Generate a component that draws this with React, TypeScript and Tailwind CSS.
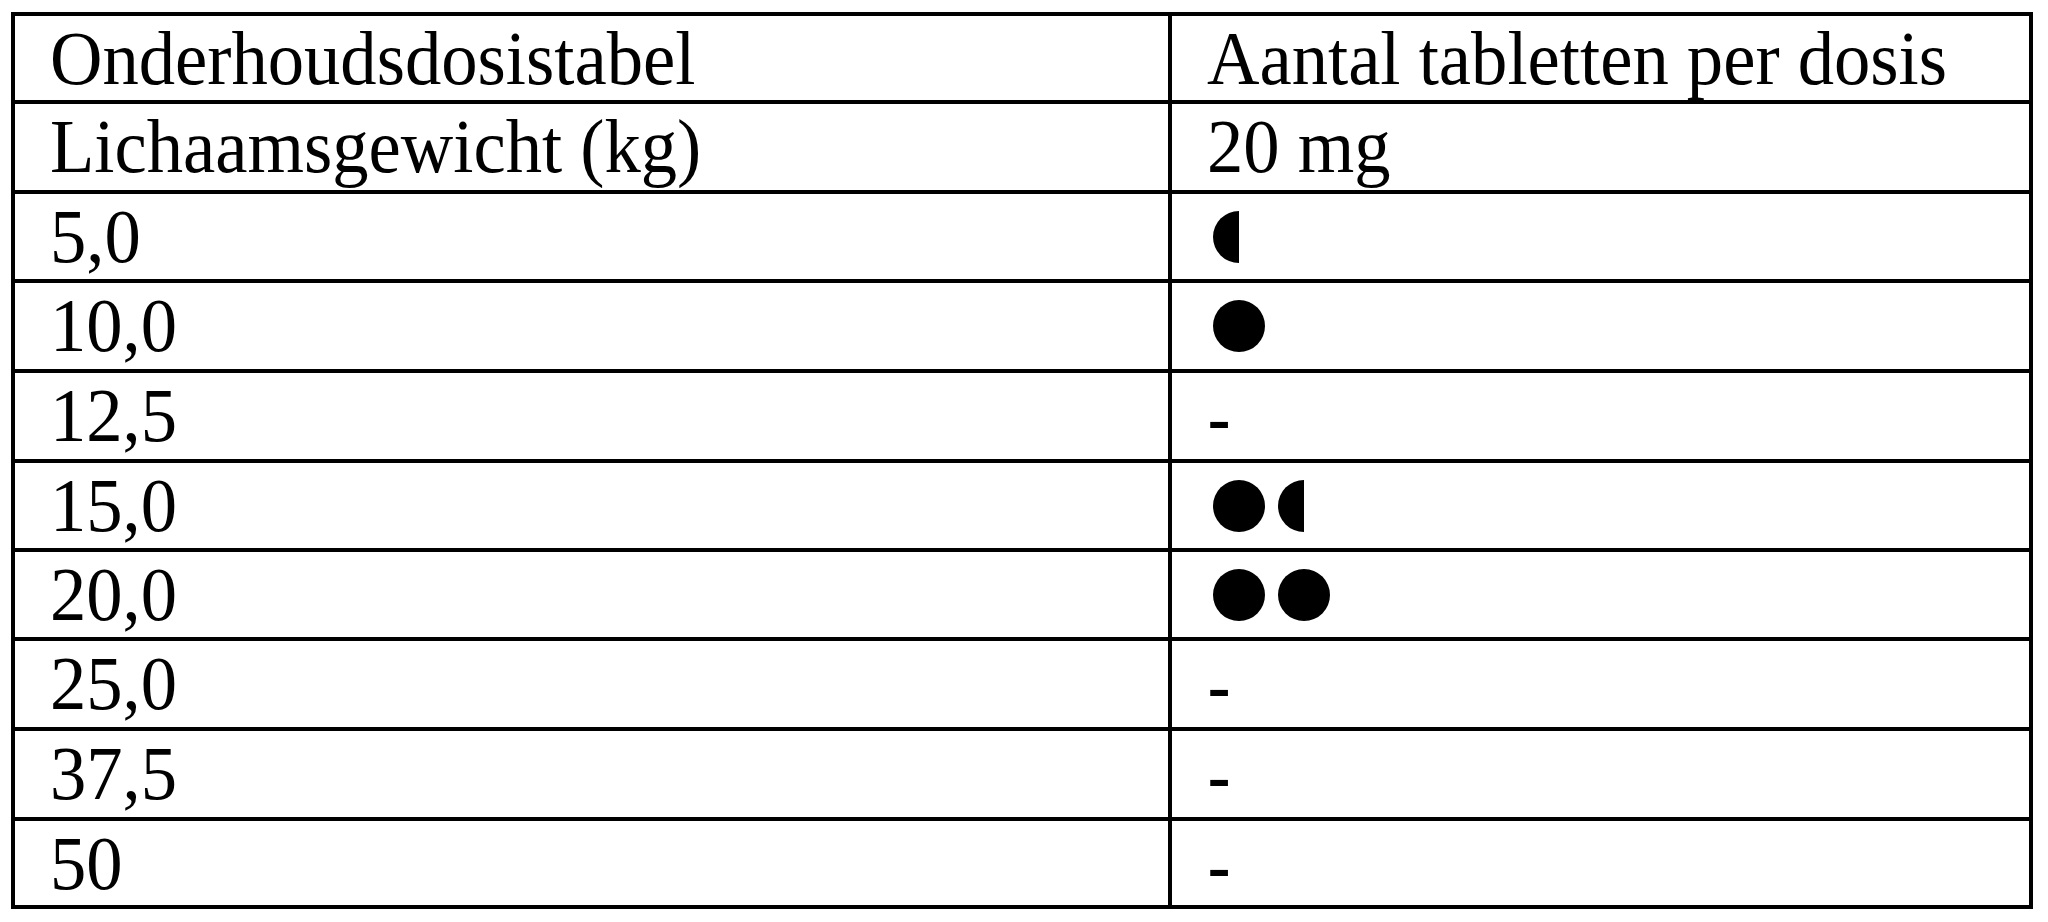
const rows: { weight: string; dose: ("full" | "half")[]; h: string }[] = [
  { weight: "5,0", dose: ["half"], h: "h-[89px]" },
  { weight: "10,0", dose: ["full"], h: "h-[90px]" },
  { weight: "12,5", dose: [], h: "h-[90px]" },
  { weight: "15,0", dose: ["full", "half"], h: "h-[89px]" },
  { weight: "20,0", dose: ["full", "full"], h: "h-[89px]" },
  { weight: "25,0", dose: [], h: "h-[90px]" },
  { weight: "37,5", dose: [], h: "h-[90px]" },
  { weight: "50", dose: [], h: "h-[88px]" },
];

const Txt = ({ children }: { children: React.ReactNode }) => (
  <span className="inline-block origin-left scale-x-[0.943] whitespace-nowrap">{children}</span>
);

// the "-" in the dose column is a heavier dash than the serif hyphen
const Dash = () => (
  <span className="inline-block origin-left translate-y-[4px] scale-x-[0.943] font-['Liberation_Sans',Arial,sans-serif]">
    -
  </span>
);

const Tablet = ({ kind }: { kind: "full" | "half" }) =>
  kind === "full" ? (
    <div className="h-[52px] w-[52px] rounded-full bg-black" />
  ) : (
    <div className="h-[52px] w-[26px] rounded-l-full bg-black" />
  );

const Row = ({
  left,
  right,
  h,
  first,
}: {
  left: React.ReactNode;
  right: React.ReactNode;
  h: string;
  first?: boolean;
}) => (
  <div className={first ? `flex ${h}` : `flex border-t-4 border-black ${h}`}>
    <div className="flex w-[1153px] items-start pl-[35px] leading-[85px]">{left}</div>
    <div className="flex flex-1 items-start border-l-4 border-black pl-[35px] leading-[85px]">{right}</div>
  </div>
);

export default function App() {
  return (
    <div className="min-h-screen w-full bg-white pt-[12px] pl-[11px] text-black">
      <div
        className="w-[2022px] border-4 border-black text-[77px]"
        style={{ fontFamily: '"Liberation Serif", "Times New Roman", serif' }}
      >
        <Row first h="h-[84px]" left={<Txt>Onderhoudsdosistabel</Txt>} right={<Txt>Aantal tabletten per dosis</Txt>} />
        <Row h="h-[90px]" left={<Txt>Lichaamsgewicht (kg)</Txt>} right={<Txt>20 mg</Txt>} />
        {rows.map((r) => (
          <Row
            key={r.weight}
            h={r.h}
            left={<Txt>{r.weight}</Txt>}
            right={
              r.dose.length === 0 ? (
                <Dash />
              ) : (
                <div className="ml-[6px] flex h-full items-center gap-[13px]">
                  {r.dose.map((d, i) => (
                    <Tablet key={i} kind={d} />
                  ))}
                </div>
              )
            }
          />
        ))}
      </div>
    </div>
  );
}
